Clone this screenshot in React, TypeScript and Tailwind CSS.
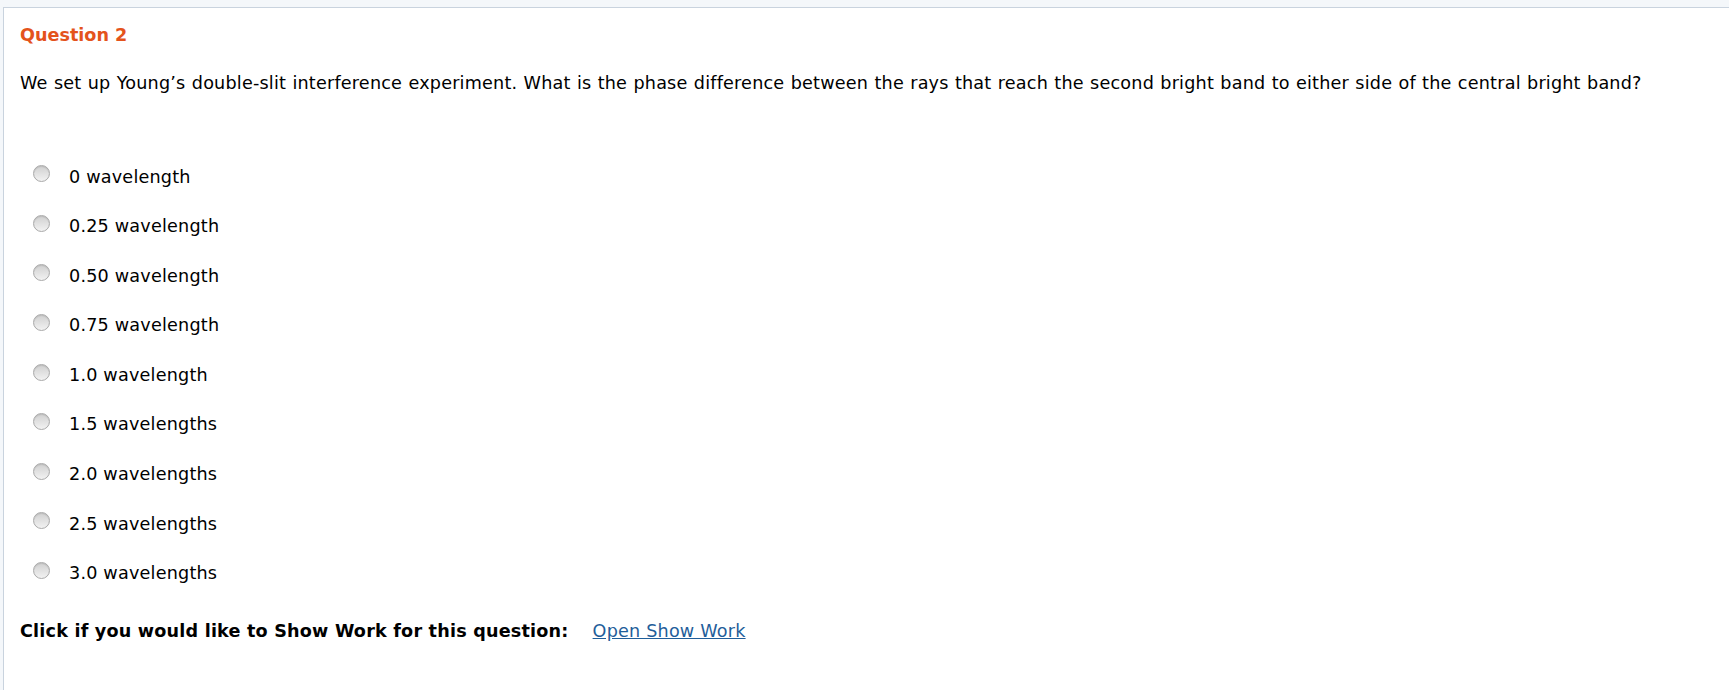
import React from "react";

const OPTIONS = [
  "0 wavelength",
  "0.25 wavelength",
  "0.50 wavelength",
  "0.75 wavelength",
  "1.0 wavelength",
  "1.5 wavelengths",
  "2.0 wavelengths",
  "2.5 wavelengths",
  "3.0 wavelengths",
];

function Radio() {
  return (
    <span className="block w-[17px] h-[17px] shrink-0 rounded-full border border-[#a9a9a9] bg-gradient-to-b from-[#d0d0d0] to-[#f2f2f2] shadow-[inset_0_1px_1px_rgba(0,0,0,0.1)] mb-[6px]" />
  );
}

export default function App() {
  return (
    <div className="min-h-[690px] bg-[#f4f7fa] pt-[7px] pl-[3px] font-['DejaVu_Sans',Verdana,sans-serif] text-black">
      <div className="min-h-[683px] bg-white border-l border-t border-[#c9d3de] px-4 pt-[17px]">
        <h2 className="text-[17.6px] font-bold text-[#e4531c] leading-[1.164]">Question 2</h2>
        <p className="mt-[28px] text-[17.6px] leading-[1.164] tracking-[0.2px] [word-spacing:0.5px]">
          We set up Young’s double-slit interference experiment. What is the phase difference between the rays that reach the second bright band to either side of the central bright band?
        </p>

        {/* Answer choices */}
        <div className="mt-[58px] flex flex-col">
          {OPTIONS.map((o) => (
            <label key={o} className="flex items-center h-[49.6px] pl-[13px] gap-[19px] text-[17.6px] leading-[1.164] tracking-[0.2px]">
              <Radio />
              <span>{o}</span>
            </label>
          ))}
        </div>

        <div className="mt-[23px] flex items-center gap-6 text-[17.6px] leading-[1.164] tracking-[0.2px]">
          <span className="font-bold">Click if you would like to Show Work for this question:</span>
          <a href="#" className="text-[#1f5e9a] underline">Open Show Work</a>
        </div>
      </div>
    </div>
  );
}
